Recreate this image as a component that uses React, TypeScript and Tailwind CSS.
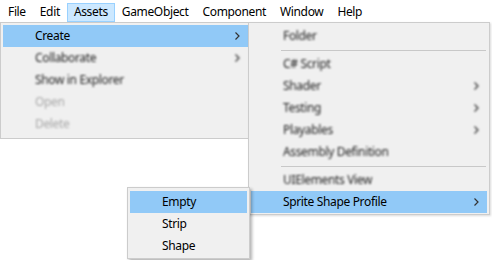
import React from "react";

type Item = { label: string; sub?: boolean; sep?: boolean; dim?: boolean; active?: boolean };

const assetsItems: Item[] = [
  { label: "Create", sub: true, active: true },
  { label: "Collaborate", sub: true },
  { label: "Show in Explorer" },
  { label: "Open", dim: true },
  { label: "Delete", dim: true },
];

const createItems: Item[] = [
  { label: "Folder" },
  { label: "", sep: true },
  { label: "C# Script" },
  { label: "Shader", sub: true },
  { label: "Testing", sub: true },
  { label: "Playables", sub: true },
  { label: "Assembly Definition" },
  { label: "", sep: true },
  { label: "UIElements View" },
  { label: "Sprite Shape Profile", sub: true, active: true },
];

const profileItems: Item[] = [
  { label: "Empty", active: true },
  { label: "Strip" },
  { label: "Shape" },
];

function Chevron({ blur }: { blur?: boolean }) {
  return (
    <svg width="5" height="8" viewBox="0 0 5 8" className={blur ? "blur-[1px]" : ""}>
      <polyline points="0.5,0.5 4,4 0.5,7.5" fill="none" stroke="#333" strokeWidth="1.2" />
    </svg>
  );
}

function Row({ item, blurred }: { item: Item; blurred: boolean }) {
  if (item.sep) {
    return (
      <div className="h-[6px] flex items-center pl-[30px] pr-[1px]">
        <div className={`h-px w-full bg-[#c8c8c8] ${blurred ? "blur-[0.5px]" : ""}`} />
      </div>
    );
  }
  const soft = blurred && !item.active;
  return (
    <div
      className={`h-[22px] flex items-center justify-between pl-[32px] pr-[8px] ${
        item.active ? "bg-[#91c9f7]" : ""
      }`}
    >
      <span
        className={`${item.dim ? "text-[#a8a8a8]" : soft ? "text-[#1e1e1e]" : "text-black"} ${
          soft ? "blur-[1.2px]" : ""
        }`}
      >
        {item.label}
      </span>
      {item.sub && <Chevron blur={soft} />}
    </div>
  );
}

export default function App() {
  const menus = ["File", "Edit", "Assets", "GameObject", "Component", "Window", "Help"];

  return (
    <div
      className="relative w-[492px] h-[260px] bg-white text-[12px] tracking-[-0.35px] overflow-hidden"
      style={{ fontFamily: '"Noto Sans", sans-serif' }}
    >
      <div className="flex h-[22px] items-center pl-[1px]">
        {menus.map((m) => (
          <div
            key={m}
            className={`h-[19px] mt-[2px] px-[6px] flex items-center border ${
              m === "Assets" ? "bg-[#cce8ff] border-[#99d1ff]" : "border-transparent"
            }`}
          >
            {m}
          </div>
        ))}
      </div>

      <div className="absolute left-0 top-[22px] w-[251px] h-[117px] bg-[#f0f0f0] border border-[#cccccc] pt-[2px] px-[2px]">
        {assetsItems.map((it) => (
          <Row key={it.label} item={it} blurred />
        ))}
      </div>

      <div className="absolute left-[248px] top-[22px] w-[242px] h-[193px] bg-[#f0f0f0] border border-[#cccccc] pt-[2px] px-[2px] shadow-[1px_1px_2px_rgba(0,0,0,0.15)]">
        {createItems.map((it, i) => (
          <Row key={i} item={it} blurred />
        ))}
      </div>

      <div className="absolute left-[127px] top-[187px] w-[123px] h-[72px] bg-[#f0f0f0] border border-[#cccccc] pt-[3px] px-[2px] shadow-[2px_2px_3px_rgba(0,0,0,0.3)]">
        {profileItems.map((it) => (
          <Row key={it.label} item={it} blurred={false} />
        ))}
      </div>
    </div>
  );
}
